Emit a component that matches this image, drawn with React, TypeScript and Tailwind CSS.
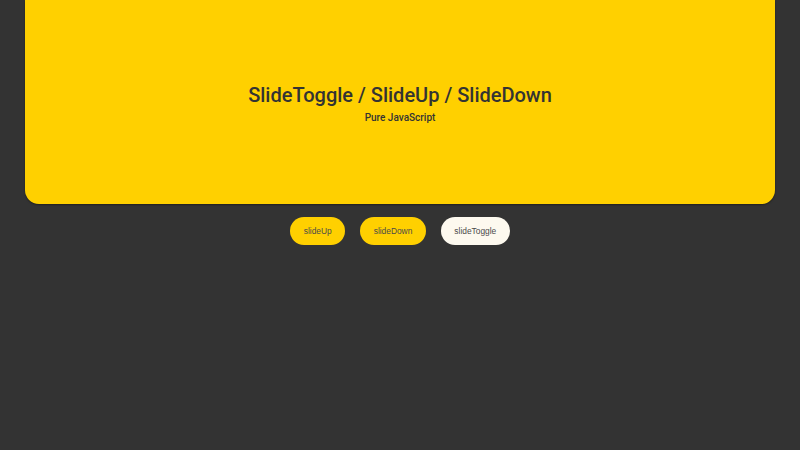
export default function App() {
  return (
    <div className="min-h-[450px] w-full bg-[#333333] px-[25px] font-['Roboto',sans-serif]">
      <div className="flex h-[204px] flex-col items-center justify-center rounded-b-[14px] bg-[#ffd000] pt-[2px] text-[#333333] shadow-[0_1px_2px_rgba(0,0,0,0.4)]">
        <h1 className="text-[20px] font-medium leading-[26px]">SlideToggle / SlideUp / SlideDown</h1>
        <p className="mt-[3px] text-[10px] font-medium leading-[14px]">Pure JavaScript</p>
      </div>
      <div className="mt-[13px] flex justify-center gap-[15px] font-['Liberation_Sans',Arial,sans-serif] text-[8.4px] text-[#4a4a4a]">
        <button type="button" className="h-[28px] rounded-full bg-[#ffd000] px-[13.5px]">
          slideUp
        </button>
        <button type="button" className="h-[28px] rounded-full bg-[#ffd000] px-[13.5px]">
          slideDown
        </button>
        <button type="button" className="h-[28px] rounded-full bg-[#fdf9ef] px-[13.5px]">
          slideToggle
        </button>
      </div>
    </div>
  );
}
